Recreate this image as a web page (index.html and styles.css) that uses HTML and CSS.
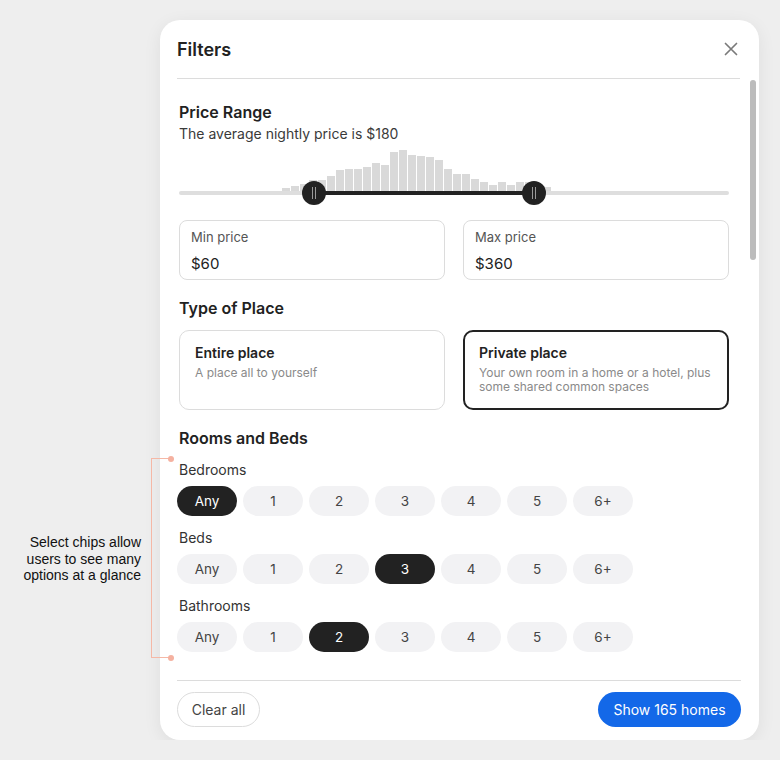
FILE: index.html
```html
<!DOCTYPE html>
<html lang="en">
<head>
<meta charset="utf-8">
<title>Filters</title>
<link rel="stylesheet" href="styles.css">
</head>
<body>
<div class="stage">
  <div class="card">
    <div class="note">Select chips allow users to see many options at a glance</div>
    <div class="bracket"><span class="dot dot-top"></span><span class="dot dot-bottom"></span></div>
    <div class="thumb"></div>

    <header class="head">
      <h1 class="title">Filters</h1>
      <svg class="close" width="14" height="14" viewBox="0 0 14 14"><path d="M1.5 1.5 L12.5 12.5 M12.5 1.5 L1.5 12.5" stroke="#7a7a7a" stroke-width="1.7" stroke-linecap="round" fill="none"/></svg>
    </header>

    <main class="body">
      <section>
        <h2 class="sec-title">Price Range</h2>
        <p class="sub">The average nightly price is $180</p>
        <div class="slider">
          <div class="hist">
            <span class="bar" style="height:5px"></span>
            <span class="bar" style="height:7px"></span>
            <span class="bar" style="height:9px"></span>
            <span class="bar" style="height:13px"></span>
            <span class="bar" style="height:13px"></span>
            <span class="bar" style="height:17px"></span>
            <span class="bar" style="height:23px"></span>
            <span class="bar" style="height:24px"></span>
            <span class="bar" style="height:24px"></span>
            <span class="bar" style="height:26px"></span>
            <span class="bar" style="height:30px"></span>
            <span class="bar" style="height:28px"></span>
            <span class="bar" style="height:41px"></span>
            <span class="bar" style="height:43px"></span>
            <span class="bar" style="height:38px"></span>
            <span class="bar" style="height:37px"></span>
            <span class="bar" style="height:36px"></span>
            <span class="bar" style="height:33px"></span>
            <span class="bar" style="height:24px"></span>
            <span class="bar" style="height:19px"></span>
            <span class="bar" style="height:19px"></span>
            <span class="bar" style="height:14px"></span>
            <span class="bar" style="height:11px"></span>
            <span class="bar" style="height:8px"></span>
            <span class="bar" style="height:11px"></span>
            <span class="bar" style="height:8px"></span>
            <span class="bar" style="height:11px"></span>
            <span class="bar" style="height:11px"></span>
            <span class="bar" style="height:8px"></span>
            <span class="bar" style="height:6px"></span>
          </div>
          <div class="track"></div>
          <div class="range"></div>
          <span class="handle handle-min"></span>
          <span class="handle handle-max"></span>
        </div>
        <div class="inputs">
          <div class="field">
            <span class="field-label">Min price</span>
            <span class="field-value">$60</span>
          </div>
          <div class="field">
            <span class="field-label">Max price</span>
            <span class="field-value">$360</span>
          </div>
        </div>
      </section>

      <section>
        <h2 class="sec-title gap-top">Type of Place</h2>
        <div class="places">
          <div class="place">
            <div class="place-title">Entire place</div>
            <div class="place-desc">A place all to yourself</div>
          </div>
          <div class="place place-on">
            <div class="place-title">Private place</div>
            <div class="place-desc">Your own room in a home or a hotel, plus some shared common spaces</div>
          </div>
        </div>
      </section>

      <section>
        <h2 class="sec-title gap-top">Rooms and Beds</h2>
        <div class="group">
          <div class="group-label">Bedrooms</div>
          <div class="chips">
            <span class="chip chip-on">Any</span><span class="chip">1</span><span class="chip">2</span><span class="chip">3</span><span class="chip">4</span><span class="chip">5</span><span class="chip">6+</span>
          </div>
        </div>
        <div class="group">
          <div class="group-label">Beds</div>
          <div class="chips">
            <span class="chip">Any</span><span class="chip">1</span><span class="chip">2</span><span class="chip chip-on">3</span><span class="chip">4</span><span class="chip">5</span><span class="chip">6+</span>
          </div>
        </div>
        <div class="group">
          <div class="group-label">Bathrooms</div>
          <div class="chips">
            <span class="chip">Any</span><span class="chip">1</span><span class="chip chip-on">2</span><span class="chip">3</span><span class="chip">4</span><span class="chip">5</span><span class="chip">6+</span>
          </div>
        </div>
      </section>
    </main>

    <footer class="foot">
      <button class="btn btn-ghost">Clear all</button>
      <button class="btn btn-primary">Show 165 homes</button>
    </footer>
  </div>
</div>
</body>
</html>
```

FILE: styles.css
```css
* { box-sizing: border-box; }

html, body {
  margin: 0;
  padding: 0;
  background: #eeeeee;
  font-family: Inter, "Noto Sans", sans-serif;
  color: #222;
}

.stage {
  padding: 20px 0 0 160px;
}

.card {
  position: relative;
  width: 599px;
  height: 720px;
  background: #fff;
  border-radius: 20px;
  box-shadow: 0 4px 18px rgba(0, 0, 0, 0.07);
  display: flex;
  flex-direction: column;
}

/* annotation */
.note {
  position: absolute;
  top: 514px;
  right: 618px;
  width: 124px;
  text-align: right;
  font-family: "Liberation Sans", Arial, sans-serif;
  font-size: 14px;
  line-height: 16.5px;
  color: #111;
}

.bracket {
  position: absolute;
  left: -9px;
  top: 438px;
  width: 20px;
  height: 200px;
  border: 1.5px solid #f5b8a6;
  border-right: none;
}

.dot {
  position: absolute;
  right: -3px;
  width: 6px;
  height: 6px;
  border-radius: 50%;
  background: #f5b1a0;
}
.dot-top { top: -3.5px; }
.dot-bottom { bottom: -3.5px; }

.thumb {
  position: absolute;
  left: 590px;
  top: 60px;
  width: 6px;
  height: 180px;
  border-radius: 3px;
  background: #bcbcbc;
}

/* header */
.head {
  height: 59px;
  margin: 0 19px 0 17px;
  border-bottom: 1px solid #dcdcdc;
  display: flex;
  align-items: center;
  justify-content: space-between;
  padding-top: 1px;
}

.title {
  margin: 0;
  font-size: 18px;
  font-weight: 600;
  color: #222;
}

.close {
  margin-right: 2px;
  margin-top: -1px;
}

/* body */
.body {
  flex: 1;
  overflow: hidden;
  padding: 23px 30px 0 19px;
}

section { margin: 0; }

.sec-title {
  margin: 0;
  font-size: 16px;
  line-height: 20px;
  font-weight: 600;
  color: #222;
}

.gap-top { margin-top: 18px; }

.sub {
  margin: 2px 0 0;
  font-size: 14px;
  line-height: 20px;
  color: #3a3a3a;
}

/* slider */
.slider {
  position: relative;
  height: 61px;
  margin-top: 1px;
}

.hist {
  height: 48px;
  display: flex;
  align-items: flex-end;
  gap: 1px;
  padding-left: 103px;
}

.bar {
  width: 8px;
  background: #d9d9d9;
  flex: none;
}

.track {
  position: absolute;
  left: 0;
  right: 0;
  top: 46px;
  height: 4px;
  border-radius: 2px;
  background: #dedede;
}

.range {
  position: absolute;
  left: 135px;
  width: 220px;
  top: 46px;
  height: 4px;
  background: #222;
}

.handle {
  position: absolute;
  top: 36px;
  width: 24px;
  height: 24px;
  border-radius: 50%;
  background: #222;
}
.handle::before,
.handle::after {
  content: "";
  position: absolute;
  top: 6px;
  width: 1px;
  height: 12px;
  background: #9a9a9a;
}
.handle::before { left: 10px; }
.handle::after { left: 13px; }
.handle-min { left: 123px; }
.handle-max { left: 343px; }

/* inputs */
.inputs {
  display: grid;
  grid-template-columns: 266px 266px;
  justify-content: space-between;
  margin-top: 14px;
}

.field {
  height: 60px;
  border: 1px solid #dcdcdc;
  border-radius: 8px;
  padding: 8px 11px 0;
  display: flex;
  flex-direction: column;
}

.field-label {
  font-size: 13px;
  line-height: 16px;
  color: #555;
}

.field-value {
  margin-top: 8px;
  font-size: 15px;
  line-height: 22px;
  color: #222;
}

/* type of place */
.places {
  display: grid;
  grid-template-columns: 266px 266px;
  justify-content: space-between;
  margin-top: 12px;
}

.place {
  height: 80px;
  border: 1px solid #dcdcdc;
  border-radius: 10px;
  padding: 13px 10px 0 15px;
}

.place-on {
  border: 2px solid #222;
  padding: 12px 9px 0 14px;
}

.place-title {
  font-size: 14px;
  line-height: 18px;
  font-weight: 600;
  color: #222;
}

.place-desc {
  margin-top: 4px;
  font-size: 12px;
  line-height: 14px;
  color: #8a8a8a;
}

/* rooms */
.group { margin-top: 13px; }

.group-label {
  font-size: 14px;
  line-height: 18px;
  color: #333;
}

.chips {
  display: flex;
  gap: 6px;
  margin: 7px 0 0 -2px;
}

.chip {
  width: 60px;
  height: 30px;
  border-radius: 15px;
  background: #f2f2f4;
  color: #444;
  font-size: 13.5px;
  display: flex;
  align-items: center;
  justify-content: center;
}

.chip-on {
  background: #222;
  color: #fff;
}

/* footer */
.foot {
  margin: 0 18px 0 17px;
  border-top: 1px solid #dcdcdc;
  padding: 11px 0 13px;
  display: flex;
  justify-content: space-between;
}

.btn {
  height: 35px;
  border-radius: 18px;
  font-family: Inter, "Noto Sans", sans-serif;
  font-size: 14px;
  padding: 0;
  white-space: nowrap;
  cursor: pointer;
}

.btn-ghost {
  width: 83px;
  background: #fff;
  border: 1px solid #dcdcdc;
  color: #444;
}

.btn-primary {
  width: 143px;
  background: #1368e8;
  border: none;
  color: #fff;
}
```
